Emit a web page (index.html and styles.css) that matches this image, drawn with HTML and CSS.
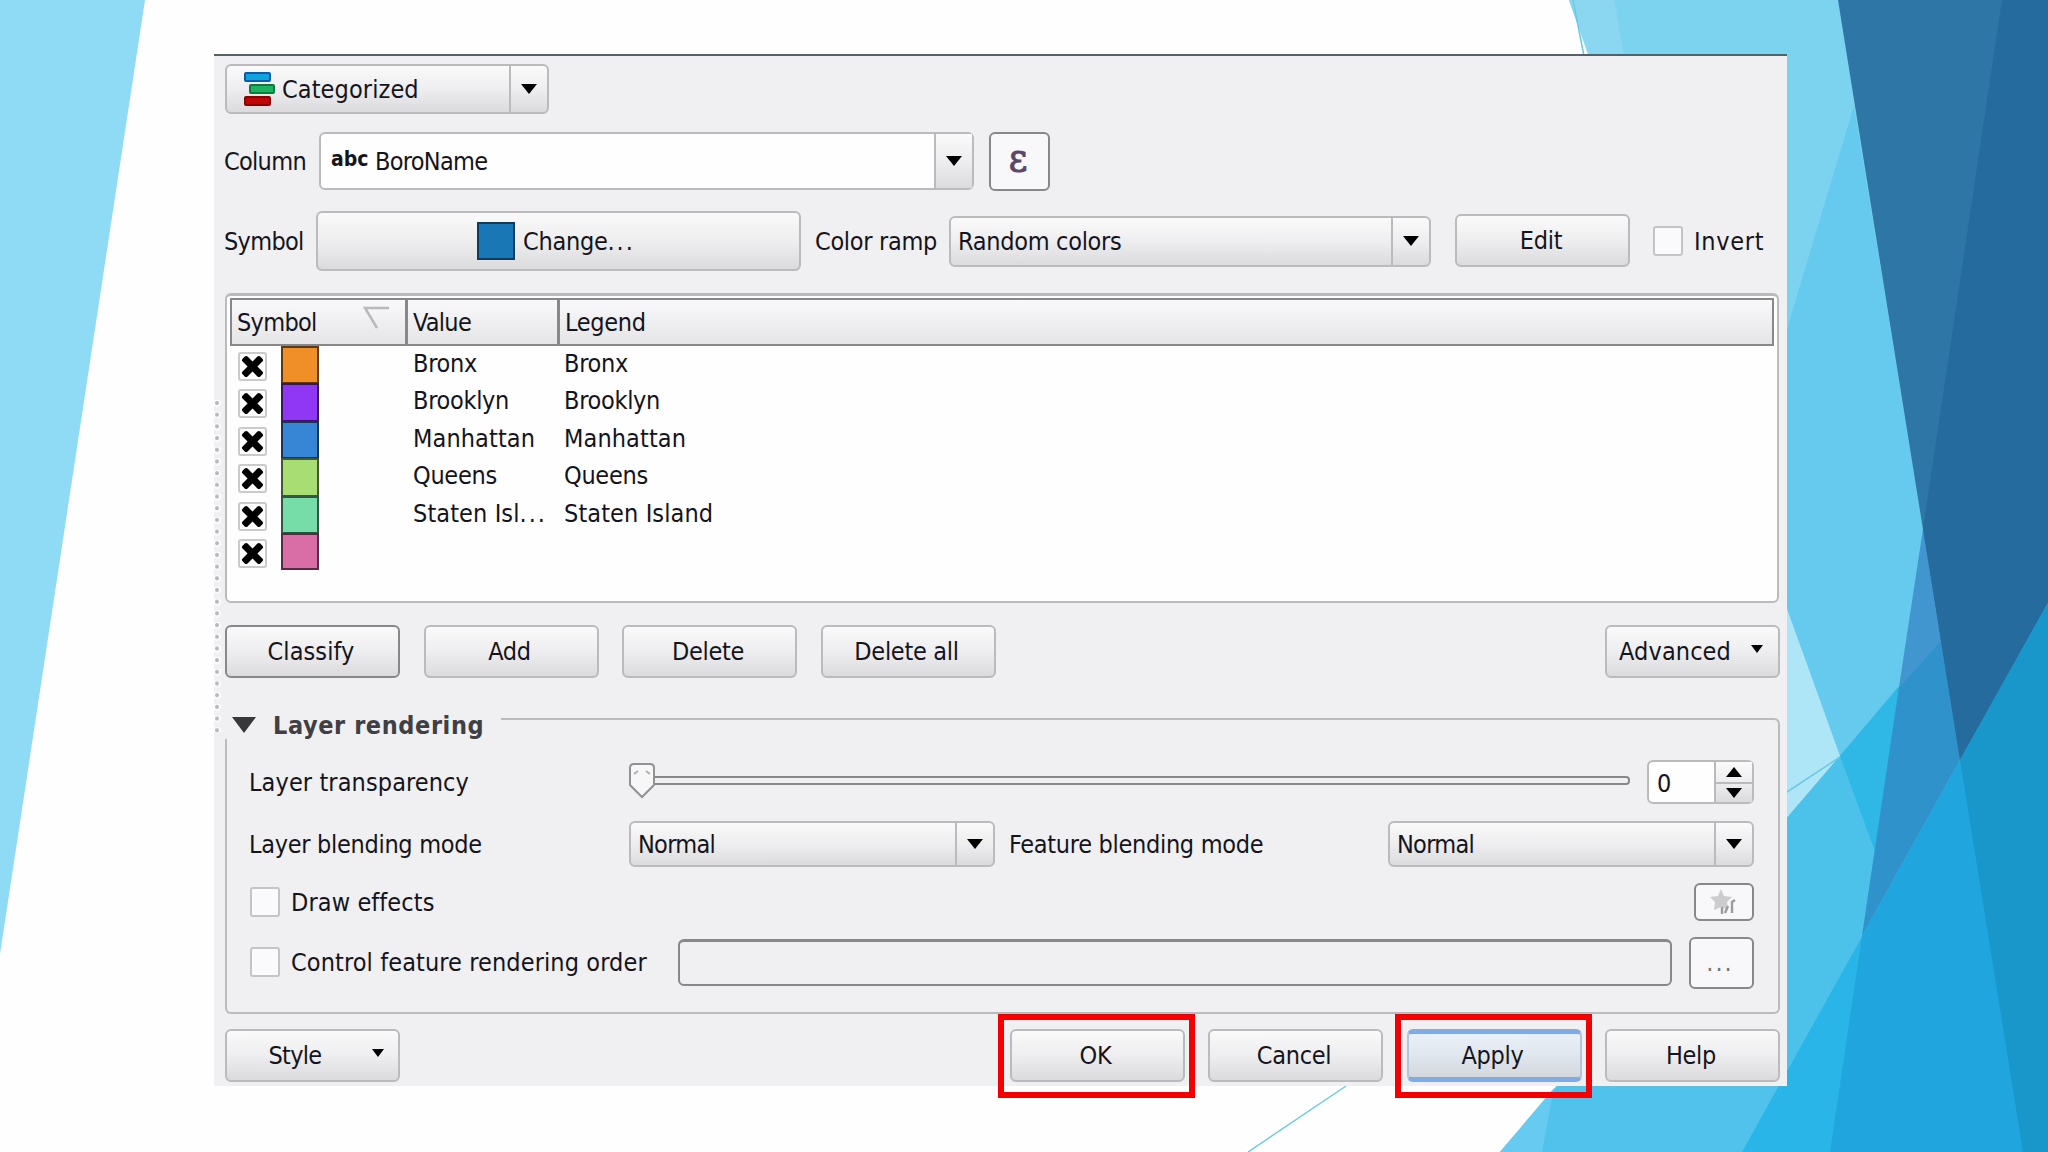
FILE: index.html
```html
<!DOCTYPE html>
<html lang="en">
<head>
    <meta charset="UTF-8">
    <title>Layer Style</title>
    <link rel="stylesheet" href="styles.css">
</head>
<body>
    <!-- Slide background -->
    <svg class="backdrop" viewBox="0 0 2048 1152">
        <polygon points="0,0 145,0 0,954" fill="#8fdaf4"/>
        <polygon points="1569,0 2048,0 2048,1152 1500,1152 1787,818 1787,609" fill="#7bd3f0"/>
        <polygon points="1569,0 1614,0 1625,60 1590,60" fill="#8bd7f1"/>
        <polygon points="1854,106 1923,529 1940,645 1840,756 1787,609 1787,329" fill="#65caee"/>
        <polygon points="1787,609 1840,756 1787,818" fill="#aee6f7"/>
        <polygon points="1941,640 1840,756 1500,1152 2048,1152 2048,640" fill="#50c2eb"/>
        <polygon points="1500,1152 1554,1088 1542,1152" fill="#67caf0"/>
        <polygon points="1840,756 1899,686 1875,852" fill="#2fb7e6"/>
        <polygon points="1840,756 1875,852 1862,936 1787,1070 1787,818" fill="#4cc1ea"/>
        <polygon points="1840,756 1900,686 1862,936 1876,852" fill="#2fb7e6"/>
        <polygon points="1923,529 1941,642 1899,687" fill="#4196cf"/>
        <polygon points="1899,687 1941,641 1960,760 1862,936" fill="#3092cb"/>
        <polygon points="1838,0 2048,0 2048,605 1960,760" fill="#2e76a6"/>
        <polygon points="2002,0 2048,0 2048,605 1960,760 1923,529" fill="#256b9e"/>
        <polygon points="2048,603 1742,1152 2048,1152" fill="#2ab5e9"/>
        <polygon points="1960,760 1862,936 1830,1152 2048,1152 2048,603" fill="#20a5de"/>
        <polygon points="2048,603 1960,760 2023,1152 2048,1152" fill="#1a97ca"/>
        <path d="M1573 0L1584 56M1248 1152L1346 1086M1787 792L1840 757" stroke="#6cc9e6" stroke-width="1.5" fill="none"/>
    </svg>

    <div class="panel">
        <div class="grip"></div>

        <div class="row renderer">
            <div class="combo combo-renderer">
                <svg class="icon-cat" width="32" height="34" viewBox="0 0 32 34">
                    <rect x="1" y="1" width="25" height="8" rx="1" fill="#0fa3dc" stroke="#0a5ca8" stroke-width="2"/>
                    <rect x="6" y="13" width="24" height="8" rx="1" fill="#1bb262" stroke="#0b7a3c" stroke-width="2"/>
                    <rect x="1" y="25" width="25" height="8" rx="1" fill="#c00505" stroke="#8a0303" stroke-width="2"/>
                </svg>
                <span class="combo-text wide">Categorized</span>
                <span class="drop"></span>
            </div>
        </div>

        <div class="row column">
            <label class="lbl-column tight">Column</label>
            <div class="combo combo-column">
                <b class="abc">abc</b>
                <span class="combo-text tight">BoroName</span>
                <span class="drop"></span>
            </div>
            <button class="btn dark epsilon">&epsilon;</button>
        </div>

        <div class="row symbol">
            <label class="lbl-symbol tight">Symbol</label>
            <button class="btn change"><i class="swatch"></i>Change<span class="ellipsis">...</span></button>
            <label class="lbl-ramp">Color ramp</label>
            <div class="combo combo-ramp">
                <span class="combo-text">Random colors</span>
                <span class="drop"></span>
            </div>
            <button class="btn edit">Edit</button>
            <i class="check"></i>
            <label class="lbl-check invert">Invert</label>
        </div>

        <div class="table">
            <div class="thead">
                <div class="th c1 tight">Symbol
                    <svg class="sort" width="28" height="24" viewBox="0 0 28 24"><path d="M26 2H2L14 22" fill="none" stroke="#b9b8ba" stroke-width="2.5"/></svg>
                </div>
                <div class="th c2 tight">Value</div>
                <div class="th c3">Legend</div>
            </div>
            <div class="tr"><i class="x"></i><i class="color orange"></i><span class="val">Bronx</span><span>Bronx</span></div>
            <div class="tr"><i class="x"></i><i class="color purple"></i><span class="val">Brooklyn</span><span>Brooklyn</span></div>
            <div class="tr wide"><i class="x"></i><i class="color blue"></i><span class="val">Manhattan</span><span>Manhattan</span></div>
            <div class="tr"><i class="x"></i><i class="color lime"></i><span class="val">Queens</span><span>Queens</span></div>
            <div class="tr wide"><i class="x"></i><i class="color mint"></i><span class="val">Staten Isl<span class="ellipsis">...</span></span><span>Staten Island</span></div>
            <div class="tr"><i class="x"></i><i class="color pink"></i><span class="val"></span><span></span></div>
        </div>

        <div class="row actions">
            <button class="btn dark wide">Classify</button>
            <button class="btn">Add</button>
            <button class="btn">Delete</button>
            <button class="btn">Delete all</button>
            <button class="btn advanced wide">Advanced<i class="caret"></i></button>
        </div>

        <div class="group">
            <div class="group-title"><i class="fold"></i><b>Layer rendering</b><span class="rule"></span></div>
            <div class="group-body">
                <div class="row transparency">
                    <label class="lbl-layer wide">Layer transparency</label>
                    <div class="slider">
                        <svg width="28" height="37" viewBox="0 0 28 37">
                            <path d="M6 2H22Q26 2 26 6V23L14 35L2 23V6Q2 2 6 2Z" fill="#f8f7f8" stroke="#929194" stroke-width="2"/>
                            <path d="M6 12L10 9M18 9L22 12" stroke="#b0afb2" stroke-width="2"/>
                        </svg>
                        <span class="track"></span>
                    </div>
                    <div class="spin">
                        <span class="num">0</span>
                        <span class="steps"><i class="up"></i><i class="down"></i></span>
                    </div>
                </div>
                <div class="row blending">
                    <label class="lbl-layer">Layer blending mode</label>
                    <div class="combo combo-blend"><span class="combo-text tight">Normal</span><span class="drop"></span></div>
                    <label class="lbl-feature">Feature blending mode</label>
                    <div class="combo combo-blend"><span class="combo-text tight">Normal</span><span class="drop"></span></div>
                </div>
                <div class="row effects">
                    <i class="check"></i>
                    <label class="lbl-check wide">Draw effects</label>
                    <button class="btn dark star">
                        <svg width="28" height="26" viewBox="0 0 28 26">
                            <path d="M11 0L14 7L22 8L17 13L18 21L11 18L4 21L5 13L0 8L8 7Z" fill="#cccbcd"/>
                            <path d="M12 18V25M15 24L18 17M22 24V13L25 11" fill="none" stroke="#9c9b9d" stroke-width="2.4"/>
                        </svg>
                    </button>
                </div>
                <div class="row order">
                    <i class="check"></i>
                    <label class="lbl-check wide">Control feature rendering order</label>
                    <div class="field"></div>
                    <button class="btn dark dots"><span class="ellipsis">...</span></button>
                </div>
            </div>
        </div>

        <div class="row footer">
            <button class="btn style tight">Style<i class="caret"></i></button>
            <div class="marked"><button class="btn">OK</button></div>
            <button class="btn">Cancel</button>
            <div class="marked"><button class="btn apply">Apply</button></div>
            <button class="btn">Help</button>
        </div>
    </div>
</body>
</html>
```
FILE: styles.css
```css
:root {
    --panel: #f0eff1;
    --line: #bbbabc;
    --dark-line: #88878a;
    --face: linear-gradient(#fafafa, #eeedef 50%, #dbdadc);
}

*,
*::before,
*::after {
    box-sizing: border-box;
}

body {
    margin: 0;
    width: 2048px;
    height: 1152px;
    overflow: hidden;
    background: #fefefe;
    font-family: "DejaVu Sans Condensed", "DejaVu Sans", sans-serif;
    font-stretch: condensed;
    font-size: 25px;
    letter-spacing: -0.3px;
    color: #15141c;
    display: flow-root;
}

.tight {
    letter-spacing: -0.7px;
}

.wide {
    letter-spacing: 0.1px;
}

.ellipsis {
    letter-spacing: 2px;
}

.backdrop {
    position: absolute;
    left: 0;
    top: 0;
    width: 2048px;
    height: 1152px;
}

.panel {
    position: relative;
    width: 1573px;
    height: 1032px;
    margin: 54px 0 0 214px;
    padding: 8px 7px 0 11px;
    border-top: 2px solid #566069;
    background: var(--panel);
}

/* dotted splitter handle over the left edge */
.grip {
    position: absolute;
    left: 0;
    top: 344px;
    width: 8px;
    height: 332px;
    background: radial-gradient(circle at 3px 3px, #b9b8bb 1.5px, #fff 2.5px, transparent 5px) 0 0 / 8px 11.7px;
}

.row {
    display: flex;
    align-items: center;
    white-space: nowrap;
}

label {
    flex: none;
}

/* buttons */
.btn {
    display: flex;
    align-items: center;
    justify-content: center;
    flex: none;
    width: 175px;
    height: 53px;
    padding: 0 3px 0 0;
    border: 2px solid var(--line);
    border-radius: 6px;
    background: var(--face);
    font: inherit;
    color: inherit;
}

.btn:not(.wide):not(.tight) {
    letter-spacing: inherit;
}

.dark {
    border-color: var(--dark-line);
}

.caret {
    border: 6.5px solid transparent;
    border-top: 8px solid #000;
    border-bottom: 0;
}

/* combo boxes */
.combo {
    display: flex;
    align-items: center;
    flex: none;
    border: 2px solid var(--line);
    border-radius: 6px;
    background: var(--face);
    padding-left: 7px;
}

.combo-text {
    flex: 1;
}

.drop {
    display: flex;
    align-items: center;
    justify-content: center;
    align-self: stretch;
    width: 38px;
    border-left: 2px solid var(--line);
}

.drop::after {
    content: "";
    border: 8.5px solid transparent;
    border-top: 10px solid #000;
    border-bottom: 0;
}

.check {
    flex: none;
    width: 30px;
    height: 30px;
    border: 2px solid #c4c3c5;
    border-radius: 3px;
    background: #faf9fb;
}

.lbl-check {
    margin-left: 11px;
}

/* top rows */
.renderer {
    height: 50px;
}

.combo-renderer {
    width: 324px;
    height: 50px;
    padding-left: 17px;
}

.icon-cat {
    margin-right: 6px;
}

.column {
    height: 58px;
    margin-top: 18px;
}

.lbl-column {
    width: 95px;
}

.lbl-column,
.lbl-symbol {
    margin-left: -1px;
}

.combo-column {
    width: 655px;
    height: 58px;
    padding-left: 10px;
    background: #fefefe;
}

.combo-column .drop {
    background: var(--face);
}

.abc {
    width: 44px;
    margin-top: -5px;
    font-size: 21px;
    letter-spacing: 0;
}

.epsilon {
    width: 61px;
    height: 59px;
    margin-left: 15px;
    padding-bottom: 8px;
    background: #f8f7f9;
    font-family: "DejaVu Serif", serif;
    font-size: 40px;
    -webkit-text-stroke: 1px #5b4763;
    color: #5b4763;
}

.symbol {
    height: 60px;
    margin-top: 21px;
}

.lbl-symbol {
    width: 92px;
}

.change {
    width: 485px;
    height: 60px;
    padding-right: 5px;
}

.swatch {
    width: 38px;
    height: 38px;
    margin-right: 8px;
    border: 2px solid #123c59;
    background: #1977b6;
}

.lbl-ramp {
    width: 134px;
    margin-left: 14px;
}

.combo-ramp {
    width: 482px;
    height: 51px;
}

.edit {
    margin: -1px 23px 0 24px;
}

.invert {
    letter-spacing: 0.7px;
}

/* category table */
.table {
    width: 1554px;
    height: 310px;
    margin-top: 22px;
    padding: 2px 3px;
    border: 2px solid var(--line);
    border-top-width: 3px;
    border-radius: 6px;
    background: #fefefe;
}

.thead {
    display: flex;
    height: 48px;
    border: 2px solid var(--dark-line);
    background: linear-gradient(#f9f8fa, #e5e4e6);
}

.th {
    position: relative;
    padding: 8px 0 0 5px;
    line-height: 30px;
}

.th + .th {
    border-left: 3px solid var(--dark-line);
}

.c1 {
    width: 173px;
}

.c2 {
    width: 152px;
}

.sort {
    position: absolute;
    left: 131px;
    top: 6px;
}

.tr {
    display: flex;
    height: 37.4px;
    padding-left: 8px;
    line-height: 35px;
}

.x {
    position: relative;
    width: 29px;
    height: 29px;
    margin-top: 6px;
    border: 2px solid #cac9cb;
    border-radius: 3px;
}

.x::before,
.x::after {
    content: "";
    position: absolute;
    left: 0;
    top: 9px;
    width: 25px;
    height: 7px;
    border-radius: 2px;
    background: #000;
    transform: rotate(45deg);
}

.x::after {
    transform: rotate(-45deg);
}

.color {
    width: 38px;
    margin: 0 94px 0 14px;
    border: 2px solid rgba(0, 0, 0, 0.6);
    border-bottom-width: 1px;
}

.orange { background: #f08f27; }
.purple { background: #9036f5; }
.blue { background: #3786d5; }
.lime { background: #a8dd74; }
.mint { background: #76dda9; }
.pink { background: #d96da6; border-bottom-width: 2px; }

.val {
    width: 151px;
}

.actions {
    height: 53px;
    margin-top: 22px;
    gap: 23.5px;
}

.advanced {
    margin-left: auto;
    gap: 20px;
}

.advanced .caret {
    margin-top: -6px;
}

/* layer rendering group */
.group {
    height: 313px;
    margin-top: 23px;
}

.group-title {
    display: flex;
    align-items: center;
    height: 38px;
    padding-left: 7px;
    padding-top: 10px;
    color: #403f44;
    letter-spacing: 0.6px;
}

.group-title b {
    margin-left: 17px;
}

.fold {
    border: 12.5px solid transparent;
    border-top: 16px solid #38373a;
    border-bottom: 0;
}

.rule {
    flex: 1;
    align-self: flex-start;
    height: 21px;
    margin: 7px 0 0 17px;
    border-top: 2px solid var(--line);
    border-right: 2px solid var(--line);
    border-top-right-radius: 6px;
}

.group-body {
    height: 275px;
    padding: 21px 24px 0 22px;
    border: 2px solid var(--line);
    border-top: 0;
    border-radius: 0 0 6px 6px;
}

.lbl-layer {
    width: 380px;
}

.transparency {
    height: 44px;
}

.slider {
    display: flex;
    align-items: center;
    width: 1002px;
    margin: -3px 17px 0 -1px;
}

.track {
    flex: 1;
    height: 9px;
    margin-left: -1px;
    border: 2px solid var(--dark-line);
    border-left: 0;
    border-radius: 0 4px 4px 0;
}

.spin {
    display: flex;
    width: 107px;
    height: 44px;
    border: 2px solid var(--line);
    border-radius: 6px;
    background: #fefefe;
}

.num {
    flex: 1;
    padding-left: 8px;
    line-height: 43px;
}

.steps {
    width: 38px;
    border-left: 2px solid var(--line);
    background: var(--face);
}

.steps i {
    display: flex;
    align-items: center;
    justify-content: center;
    height: 20px;
}

.steps .down {
    border-top: 2px solid var(--line);
}

.steps i::after {
    content: "";
    border: 8.5px solid transparent;
    border-top: 10px solid #000;
    border-bottom: 0;
}

.steps .up::after {
    transform: rotate(180deg);
}

.blending {
    height: 46px;
    margin-top: 17px;
}

.combo-blend {
    width: 366px;
    height: 46px;
}

.lbl-feature {
    width: 379px;
    margin-left: 14px;
}

.effects {
    height: 38px;
    margin-top: 16px;
}

.star {
    width: 60px;
    height: 38px;
    margin-left: auto;
    padding: 0;
    background: #f8f7f9;
}

.order {
    height: 51px;
    margin-top: 16px;
}

.field {
    width: 994px;
    height: 47px;
    margin-left: auto;
    border: 2px solid var(--dark-line);
    border-top-width: 3px;
    border-radius: 6px;
}

.dots {
    width: 65px;
    height: 52px;
    margin-left: 17px;
    background: #f8f7f9;
    color: #77767a;
}

.effects .check,
.order .check {
    margin-left: 1px;
}

.order .check {
    margin-top: -2px;
}

/* dialog buttons */
.footer {
    height: 53px;
    margin-top: 15px;
    gap: 23.5px;
}

.style {
    margin-right: auto;
    padding-left: 30px;
    gap: 50px;
}

.style .caret {
    margin-top: -6px;
}

.marked {
    position: relative;
}

.marked::after {
    content: "";
    position: absolute;
    left: -12px;
    top: -15px;
    width: 197px;
    height: 84px;
    border: 6px solid #f50000;
}

.apply {
    border-color: #b5c3d8;
    border-top: 5px solid #7fabe6;
    border-bottom: 5px solid #7fabe6;
    background: linear-gradient(#e9f0f8, #e0e6ed 50%, #d3d8de);
}
```
